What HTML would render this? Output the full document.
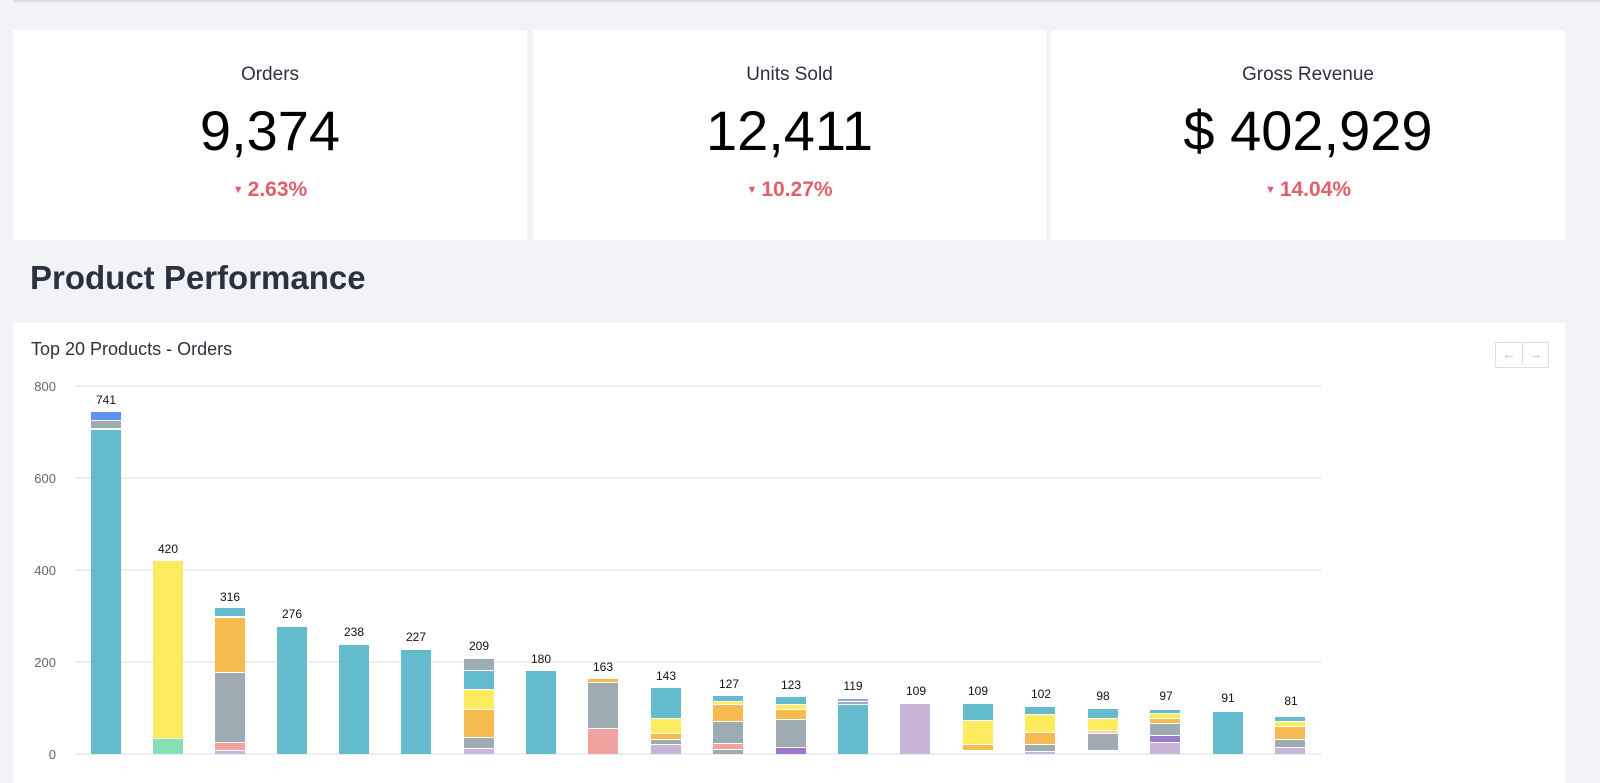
<!DOCTYPE html>
<html><head><meta charset="utf-8"><style>
body{margin:0;width:1600px;height:776px;background:#f2f3f7;font-family:"Liberation Sans",sans-serif;position:relative;overflow:hidden}
.topline{position:absolute;left:13px;top:0;width:1587px;height:2px;background:#dcdde2}
.card{position:absolute;top:30px;height:210px;background:#fff;text-align:center}
.card .t{position:absolute;top:34px;width:100%;font-size:19px;color:#2e3040}
.card .v{position:absolute;top:68px;width:100%;font-size:56px;color:#000;line-height:66px}
.card .d{position:absolute;top:148px;width:100%;font-size:21px;color:#e0606a;font-weight:bold}
.card .d span{font-size:11px;vertical-align:3px;margin-right:4px}
h2{position:absolute;left:30px;top:259px;margin:0;font-size:33px;color:#2e3040;font-weight:bold}
.chart{position:absolute;left:13px;top:323px;width:1552px;height:460px;background:#fff}
.ct{position:absolute;left:31px;top:339px;font-size:18px;color:#2e3040}
.nav{position:absolute;left:1495px;top:342px;width:52px;height:24px;border:1px solid #ddd;border-radius:2px;background:#fff;color:#bbb;font-size:14px;line-height:22px}
.nav i{float:left;width:26px;text-align:center;font-style:normal}
.nav i+i{border-left:1px solid #ddd;width:25px}
</style></head><body>
<div class="topline"></div>
<div class="card" style="left:13px;width:514px"><div class="t">Orders</div><div class="v">9,374</div><div class="d"><span>▼</span>2.63%</div></div>
<div class="card" style="left:533px;width:513px"><div class="t">Units Sold</div><div class="v">12,411</div><div class="d"><span>▼</span>10.27%</div></div>
<div class="card" style="left:1051px;width:514px"><div class="t">Gross Revenue</div><div class="v">$ 402,929</div><div class="d"><span>▼</span>14.04%</div></div>
<h2>Product Performance</h2>
<div class="chart"></div>
<div class="ct">Top 20 Products - Orders</div>
<div class="nav"><i>←</i><i>→</i></div>
<svg style="position:absolute;left:0;top:0" width="1600" height="776" font-family="Liberation Sans, sans-serif">
<g stroke="#e8e8ec" stroke-width="1.5">
<line x1="75" x2="1322" y1="386" y2="386"/><line x1="75" x2="1322" y1="478" y2="478"/><line x1="75" x2="1322" y1="570" y2="570"/><line x1="75" x2="1322" y1="662" y2="662"/><line x1="75" x2="1322" y1="754" y2="754"/>
</g>
<g fill="#666" font-size="13" text-anchor="end">
<text x="56" y="391">800</text><text x="56" y="483">600</text><text x="56" y="575">400</text><text x="56" y="667">200</text><text x="56" y="759">0</text>
</g>
<g>
<rect x="91" y="430" width="30" height="324" fill="#62bccd"/><rect x="91" y="421" width="30" height="7" fill="#9eabb2"/><rect x="91" y="412" width="30" height="8" fill="#6093f0"/>
<rect x="153" y="739" width="30" height="15" fill="#87dfb4"/><rect x="153" y="561" width="30" height="177" fill="#fdeb5f"/>
<rect x="215" y="751" width="30" height="3" fill="#c7b4d6"/><rect x="215" y="743" width="30" height="7" fill="#f2a29e"/><rect x="215" y="673" width="30" height="69" fill="#9eabb2"/><rect x="215" y="618" width="30" height="54" fill="#f5bb50"/><rect x="215" y="608" width="30" height="8" fill="#62bccd"/>
<rect x="277" y="627" width="30" height="127" fill="#62bccd"/>
<rect x="339" y="645" width="30" height="109" fill="#62bccd"/>
<rect x="401" y="650" width="30" height="104" fill="#62bccd"/>
<rect x="464" y="749" width="30" height="5" fill="#c7b4d6"/><rect x="464" y="738" width="30" height="10" fill="#9eabb2"/><rect x="464" y="710" width="30" height="27" fill="#f5bb50"/><rect x="464" y="690" width="30" height="19" fill="#fdeb5f"/><rect x="464" y="671" width="30" height="18" fill="#62bccd"/><rect x="464" y="659" width="30" height="11" fill="#9eabb2"/>
<rect x="526" y="671" width="30" height="83" fill="#62bccd"/>
<rect x="588" y="729" width="30" height="25" fill="#f2a29e"/><rect x="588" y="683" width="30" height="45" fill="#9eabb2"/><rect x="588" y="679" width="30" height="3" fill="#f5bb50"/>
<rect x="651" y="745" width="30" height="9" fill="#c7b4d6"/><rect x="651" y="740" width="30" height="4" fill="#9eabb2"/><rect x="651" y="734" width="30" height="5" fill="#f5bb50"/><rect x="651" y="719" width="30" height="14" fill="#fdeb5f"/><rect x="651" y="688" width="30" height="30" fill="#62bccd"/>
<rect x="713" y="750" width="30" height="4" fill="#9eabb2"/><rect x="713" y="744" width="30" height="5" fill="#f2a29e"/><rect x="713" y="722" width="30" height="21" fill="#9eabb2"/><rect x="713" y="705" width="30" height="16" fill="#f5bb50"/><rect x="713" y="702" width="30" height="2" fill="#fdeb5f"/><rect x="713" y="696" width="30" height="5" fill="#62bccd"/>
<rect x="776" y="748" width="30" height="6" fill="#9c78c9"/><rect x="776" y="720" width="30" height="27" fill="#9eabb2"/><rect x="776" y="710" width="30" height="9" fill="#f5bb50"/><rect x="776" y="705" width="30" height="4" fill="#fdeb5f"/><rect x="776" y="697" width="30" height="7" fill="#62bccd"/>
<rect x="838" y="705" width="30" height="49" fill="#62bccd"/><rect x="838" y="702" width="30" height="2" fill="#9eabb2"/><rect x="838" y="699" width="30" height="2" fill="#8fa8f0"/>
<rect x="900" y="704" width="30" height="50" fill="#c7b4d6"/>
<rect x="963" y="745" width="30" height="5" fill="#f5bb50"/><rect x="963" y="721" width="30" height="23" fill="#fdeb5f"/><rect x="963" y="704" width="30" height="16" fill="#62bccd"/>
<rect x="1025" y="752" width="30" height="2" fill="#c7b4d6"/><rect x="1025" y="745" width="30" height="6" fill="#9eabb2"/><rect x="1025" y="733" width="30" height="11" fill="#f5bb50"/><rect x="1025" y="715" width="30" height="17" fill="#fdeb5f"/><rect x="1025" y="707" width="30" height="7" fill="#62bccd"/>
<rect x="1088" y="734" width="30" height="16" fill="#9eabb2"/><rect x="1088" y="731" width="30" height="2" fill="#f9d29a"/><rect x="1088" y="719" width="30" height="11" fill="#fdeb5f"/><rect x="1088" y="709" width="30" height="9" fill="#62bccd"/>
<rect x="1150" y="743" width="30" height="11" fill="#c7b4d6"/><rect x="1150" y="736" width="30" height="6" fill="#9c78c9"/><rect x="1150" y="724" width="30" height="11" fill="#9eabb2"/><rect x="1150" y="719" width="30" height="4" fill="#f5bb50"/><rect x="1150" y="714" width="30" height="4" fill="#fdeb5f"/><rect x="1150" y="710" width="30" height="3" fill="#62bccd"/>
<rect x="1213" y="712" width="30" height="42" fill="#62bccd"/>
<rect x="1275" y="748" width="30" height="6" fill="#c7b4d6"/><rect x="1275" y="740" width="30" height="7" fill="#9eabb2"/><rect x="1275" y="727" width="30" height="12" fill="#f5bb50"/><rect x="1275" y="722" width="30" height="4" fill="#fdeb5f"/><rect x="1275" y="717" width="30" height="4" fill="#62bccd"/>
</g>
<g font-size="12" fill="#111" text-anchor="middle">
<text x="106" y="404">741</text><text x="168" y="553">420</text><text x="230" y="601">316</text><text x="292" y="618">276</text><text x="354" y="636">238</text><text x="416" y="641">227</text><text x="479" y="650">209</text><text x="541" y="663">180</text><text x="603" y="671">163</text><text x="666" y="680">143</text><text x="729" y="688">127</text><text x="791" y="689">123</text><text x="853" y="690">119</text><text x="916" y="695">109</text><text x="978" y="695">109</text><text x="1041" y="698">102</text><text x="1103" y="700">98</text><text x="1166" y="700">97</text><text x="1228" y="702">91</text><text x="1291" y="705">81</text>
</g>
</svg>
</body></html>
